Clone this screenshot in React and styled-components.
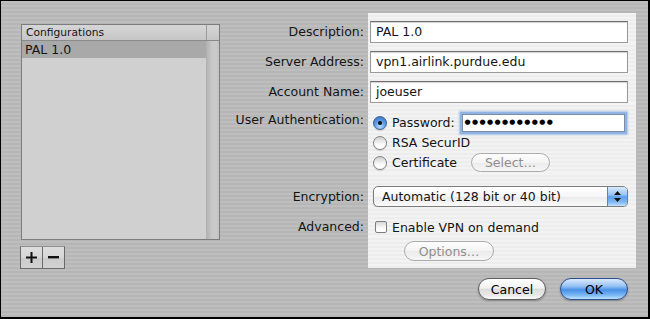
import React from 'react';
import styled, { createGlobalStyle } from 'styled-components';

const GlobalStyle = createGlobalStyle`
  body {
    margin: 0;
  }
`;

const Window = styled.div`
  width: 650px;
  height: 319px;
  box-sizing: border-box;
  border: solid #000;
  border-width: 1px 2px 2px 1px;
  background: repeating-linear-gradient(to bottom, #bebebe 0 2px, #b6b6b6 2px 4px);
  display: flex;
  font-family: "DejaVu Sans", sans-serif;
  font-size: 12.5px;
  color: #141414;
  overflow: hidden;
`;

const LeftColumn = styled.div`
  width: 199px;
  margin: 23px 0 0 20px;
  display: flex;
  flex-direction: column;
`;

const ListBox = styled.div`
  height: 216px;
  box-sizing: border-box;
  border: 1px solid #7c7c7c;
  background: #d0d0d0;
  display: flex;
  flex-direction: column;
`;

const ListHeader = styled.div`
  display: flex;
  height: 16px;
  box-sizing: border-box;
  border-bottom: 1px solid #8a8a8a;
  background: linear-gradient(to bottom, #d6d6d6, #c6c6c6);
`;

const HeaderCell = styled.div`
  flex: 1;
  padding-left: 4px;
  font-size: 10.7px;
  line-height: 15px;
  border-right: 1px solid #9c9c9c;
`;

const HeaderCorner = styled.div`
  width: 12px;
`;

const ListBody = styled.div`
  flex: 1;
  display: flex;
`;

const ListRows = styled.div`
  flex: 1;
`;

const ListRow = styled.div`
  height: 17px;
  line-height: 17px;
  padding-left: 3px;
  background: ${p => (p.$selected ? '#a9a9a9' : 'transparent')};
`;

const EdgeStrip = styled.div`
  width: 13px;
  background: linear-gradient(to right, #b0b0b0, #c8c8c8 45%, #cacaca 80%, #c2c2c2);
`;

const SegmentGroup = styled.div`
  display: flex;
  width: 45px;
  height: 23px;
  margin: 6px 0 0 -1px;
  box-sizing: border-box;
  border: 1px solid #6a6a6a;
  border-top-color: #8e8e8e;
`;

const SegmentButton = styled.div`
  flex: 1;
  display: flex;
  align-items: center;
  justify-content: center;
  background: linear-gradient(to bottom, #dedede 0%, #d6d6d6 50%, #cbcbcb 52%, #d2d2d2 100%);
  & + & {
    border-left: 1px solid #6a6a6a;
  }
`;

const FormColumn = styled.div`
  margin-top: 12px;
  display: flex;
  flex-direction: column;
`;

const Row = styled.div`
  display: grid;
  grid-template-columns: 148px 268px;
  align-items: stretch;
`;

const Label = styled.div`
  padding: ${p => p.$pt}px 4px 0 0;
  text-align: right;
  line-height: ${p => p.$h}px;
  white-space: nowrap;
`;

const FieldCell = styled.div`
  padding: ${p => p.$pt}px 8px ${p => p.$pb || 0}px 2px;
  background: repeating-linear-gradient(to bottom, #f3f3f3 0 2px, #ededed 2px 4px);
  display: flex;
  flex-direction: column;
`;

const TextField = styled.div`
  height: 22px;
  box-sizing: border-box;
  border: 1px solid #9a9a9a;
  border-top-color: #6e6e6e;
  background: #fff;
  box-shadow: inset 0 1px 1px rgba(0, 0, 0, 0.18);
  padding-left: 5px;
  line-height: 20px;
  white-space: nowrap;
`;

const Line = styled.div`
  display: flex;
  align-items: center;
  height: ${p => p.$h}px;
  padding-left: ${p => p.$indent || 3}px;
`;

const Radio = styled.span`
  width: 14px;
  height: 14px;
  box-sizing: border-box;
  border-radius: 50%;
  flex: none;
  display: flex;
  align-items: center;
  justify-content: center;
  border: 1px solid ${p => (p.$on ? '#3f628f' : '#838383')};
  background: ${p =>
    p.$on
      ? 'radial-gradient(circle at 50% 80%, #b9dcff 0%, #5f9fe8 45%, #2f6cc2 100%)'
      : 'linear-gradient(to bottom, #cfcfcf, #fafafa 60%, #ffffff)'};
  box-shadow: 0 1px 1px rgba(0, 0, 0, 0.15);
  &::after {
    content: '';
    display: ${p => (p.$on ? 'block' : 'none')};
    width: 4px;
    height: 4px;
    border-radius: 50%;
    background: #101010;
  }
`;

const Checkbox = styled.span`
  width: 12px;
  height: 12px;
  box-sizing: border-box;
  flex: none;
  border: 1px solid #7e7e7e;
  border-radius: 2px;
  background: linear-gradient(to bottom, #d8d8d8, #fbfbfb 60%, #ffffff);
`;

const OptionText = styled.span`
  margin-left: ${p => p.$gap || 5}px;
  white-space: nowrap;
`;

const PasswordField = styled.div`
  flex: 1;
  height: 18px;
  margin: 0 3px 0 7px;
  box-sizing: border-box;
  border: 1px solid #7a8ea8;
  background: #fff;
  box-shadow: 0 0 1px 2px #8fb3e2, 0 0 2px 3px rgba(120, 165, 225, 0.5);
  padding-left: 2px;
  display: flex;
  align-items: center;
`;

const Dots = styled.span`
  font-size: 7px;
  letter-spacing: 1.35px;
  line-height: 1;
  color: #000;
`;

const PillButton = styled.div`
  width: ${p => p.$w}px;
  height: ${p => p.$h}px;
  box-sizing: border-box;
  border-radius: ${p => p.$h / 2}px;
  display: flex;
  align-items: center;
  justify-content: center;
  flex: none;
  margin-left: ${p => p.$ml || 0}px;
  color: ${p => (p.$disabled ? '#8e8e8e' : '#000')};
  border: 1px solid ${p => (p.$primary ? '#2c4f8c' : p.$disabled ? '#ababab' : '#5e5e5e')};
  background: ${p =>
    p.$primary
      ? 'linear-gradient(to bottom, #dbeafc 0%, #98c4f5 35%, #5d9de9 50%, #4a90e6 55%, #79b6f3 80%, #bfe3ff 100%)'
      : p.$disabled
      ? 'linear-gradient(to bottom, #fdfdfd 0%, #f4f4f4 50%, #ebebeb 52%, #f6f6f6 100%)'
      : 'linear-gradient(to bottom, #ffffff 0%, #f1f1f1 45%, #dcdcdc 52%, #e8e8e8 80%, #fbfbfb 100%)'};
  box-shadow: ${p => (p.$disabled ? 'none' : '0 1px 2px rgba(0, 0, 0, 0.3)')};
`;

const Popup = styled.div`
  height: 21px;
  margin-left: 3px;
  box-sizing: border-box;
  border: 1px solid #7c7c7c;
  border-radius: 5px;
  display: flex;
  overflow: hidden;
  background: linear-gradient(to bottom, #ffffff 0%, #f6f6f6 50%, #ececec 55%, #fafafa 100%);
  box-shadow: 0 1px 1px rgba(0, 0, 0, 0.2);
`;

const PopupText = styled.div`
  flex: 1;
  padding-left: 8px;
  line-height: 19px;
  white-space: nowrap;
`;

const PopupArrows = styled.div`
  width: 19px;
  border-left: 1px solid #5c82b8;
  display: flex;
  align-items: center;
  justify-content: center;
  background: linear-gradient(to bottom, #d8e9fd 0%, #9cc6f6 40%, #5f9feb 52%, #7fb8f4 80%, #c4e3ff 100%);
`;

const ButtonBar = styled.div`
  display: flex;
  justify-content: flex-end;
  gap: 14px;
  margin-top: 10px;
  padding-right: 8px;
`;

function App() {
  return (
    <>
      <GlobalStyle />
      <Window>
        <LeftColumn>
          <ListBox>
            <ListHeader>
              <HeaderCell>Configurations</HeaderCell>
              <HeaderCorner />
            </ListHeader>
            <ListBody>
              <ListRows>
                <ListRow $selected>PAL 1.0</ListRow>
              </ListRows>
              <EdgeStrip />
            </ListBody>
          </ListBox>
          <SegmentGroup>
            <SegmentButton>
              <svg width="11" height="11" viewBox="0 0 11 11">
                <path d="M4.5 0h2v4.5H11v2H6.5V11h-2V6.5H0v-2h4.5z" fill="#111" />
              </svg>
            </SegmentButton>
            <SegmentButton>
              <svg width="11" height="3" viewBox="0 0 11 3">
                <rect width="11" height="2.4" fill="#111" />
              </svg>
            </SegmentButton>
          </SegmentGroup>
        </LeftColumn>

        <FormColumn>
          <Row>
            <Label $pt={8} $h={22}>Description:</Label>
            <FieldCell $pt={8}>
              <TextField>PAL 1.0</TextField>
            </FieldCell>
          </Row>
          <Row>
            <Label $pt={8} $h={22}>Server Address:</Label>
            <FieldCell $pt={8}>
              <TextField>vpn1.airlink.purdue.edu</TextField>
            </FieldCell>
          </Row>
          <Row>
            <Label $pt={8} $h={22}>Account Name:</Label>
            <FieldCell $pt={8}>
              <TextField>joeuser</TextField>
            </FieldCell>
          </Row>
          <Row>
            <Label $pt={9} $h={16}>User Authentication:</Label>
            <FieldCell $pt={9}>
              <Line $h={21}>
                <Radio $on />
                <OptionText>Password:</OptionText>
                <PasswordField>
                  <Dots>●●●●●●●●●●●●</Dots>
                </PasswordField>
              </Line>
              <Line $h={19}>
                <Radio />
                <OptionText>RSA SecurID</OptionText>
              </Line>
              <Line $h={21}>
                <Radio />
                <OptionText>Certificate</OptionText>
                <PillButton $w={79} $h={19} $ml={14} $disabled>Select…</PillButton>
              </Line>
            </FieldCell>
          </Row>
          <Row>
            <Label $pt={13} $h={21}>Encryption:</Label>
            <FieldCell $pt={13}>
              <Popup>
                <PopupText>Automatic (128 bit or 40 bit)</PopupText>
                <PopupArrows>
                  <svg width="7" height="11" viewBox="0 0 7 11">
                    <path d="M3.5 0L7 4H0z M0 7h7l-3.5 4z" fill="#111" />
                  </svg>
                </PopupArrows>
              </Popup>
            </FieldCell>
          </Row>
          <Row>
            <Label $pt={11} $h={18}>Advanced:</Label>
            <FieldCell $pt={11}>
              <Line $h={18} $indent={5}>
                <Checkbox />
                <OptionText $gap={5}>Enable VPN on demand</OptionText>
              </Line>
            </FieldCell>
          </Row>
          <Row>
            <Label $pt={5} $h={20} />
            <FieldCell $pt={5} $pb={7}>
              <Line $h={20} $indent={34}>
                <PillButton $w={90} $h={20} $disabled>Options…</PillButton>
              </Line>
            </FieldCell>
          </Row>
          <ButtonBar>
            <PillButton $w={68} $h={22}>Cancel</PillButton>
            <PillButton $w={68} $h={22} $primary>OK</PillButton>
          </ButtonBar>
        </FormColumn>
      </Window>
    </>
  );
}

export default App;
